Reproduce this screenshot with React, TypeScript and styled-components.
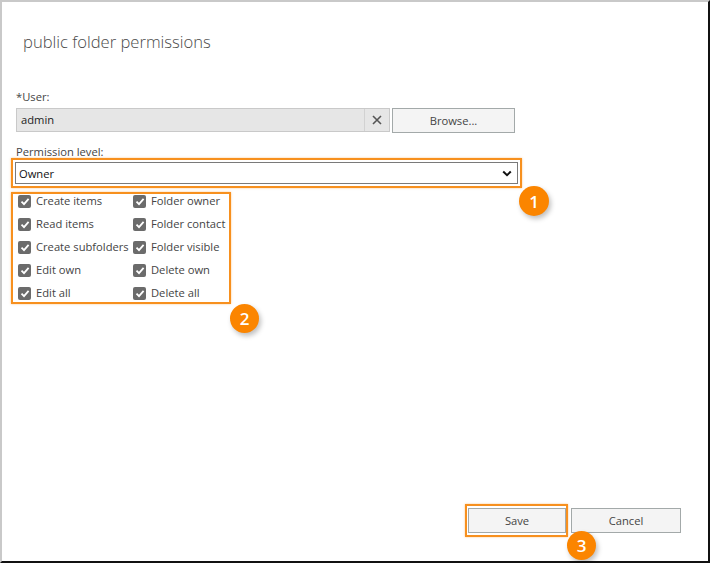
import React from 'react';
import styled, { createGlobalStyle } from 'styled-components';

const GlobalStyle = createGlobalStyle`
	html, body {
		margin: 0;
		padding: 0;
		background: #ffffff;
	}
	body {
		font-family: 'Open Sans', 'Noto Sans', sans-serif;
		color: #333333;
	}
`;

const ORANGE = '#f7901e';
const TEXT_SIZE = '11.2px';

const Frame = styled.div`
	position: relative;
	box-sizing: border-box;
	width: 710px;
	height: 563px;
	display: flex;
	flex-direction: column;
	border-top: 2px solid #c9c9c9;
	border-left: 2px solid #c9c9c9;
	border-right: 2px solid #111111;
	border-bottom: 2px solid #111111;
	background: #ffffff;
`;

const Title = styled.h1`
	margin: 29px 0 0 21px;
	font-size: 16.6px;
	line-height: 22px;
	font-weight: 300;
	color: #4a4a4a;
`;

const Form = styled.div`
	display: flex;
	flex-direction: column;
	padding: 36px 0 0 14px;
`;

const Label = styled.div<{ $height?: number }>`
	font-size: ${TEXT_SIZE};
	line-height: ${(p) => p.$height ?? 16}px;
	color: #444444;
	white-space: nowrap;
`;

const UserRow = styled.div`
	display: flex;
	align-items: stretch;
	gap: 2px;
	margin: 3px 0 13px;
	height: 24px;
`;

const UserInput = styled.div`
	box-sizing: border-box;
	width: 374px;
	display: flex;
	background: #e6e6e6;
	border: 1px solid #c9c9c9;
`;

const UserValue = styled.div`
	flex: 1;
	padding-left: 4px;
	font-size: ${TEXT_SIZE};
	line-height: 22px;
	color: #222222;
`;

const ClearCell = styled.div`
	width: 24px;
	display: flex;
	align-items: center;
	justify-content: center;
	border-left: 1px solid #d2d2d2;
`;

const Button = styled.button<{ $width: number }>`
	box-sizing: border-box;
	width: ${(p) => p.$width}px;
	height: 25px;
	padding: 0;
	background: #f4f4f4;
	border: 1px solid #a3a9a9;
	font-family: inherit;
	font-size: ${TEXT_SIZE};
	color: #444444;
	cursor: pointer;
`;

const Highlight = styled.div<{ $width?: number }>`
	position: relative;
	box-sizing: border-box;
	width: ${(p) => (p.$width ? `${p.$width}px` : 'auto')};
	border: 2px solid ${ORANGE};
	box-shadow: 0 0 2px rgba(247, 144, 30, 0.5);
`;

const SelectWrap = styled(Highlight)`
	margin-left: -5px;
	padding: 2px;
`;

const SelectBox = styled.div`
	box-sizing: border-box;
	height: 22px;
	display: flex;
	align-items: center;
	justify-content: space-between;
	padding: 0 5px 0 3px;
	border: 1px solid #7a7a7a;
	background: #ffffff;
	font-size: ${TEXT_SIZE};
	color: #111111;
`;

const CheckGroup = styled(Highlight)`
	margin: 4px 0 0 -5px;
	padding: 0 0 2px 5px;
	display: grid;
	grid-template-columns: 115px 1fr;
	row-gap: 9px;
`;

const CheckItem = styled.label`
	display: flex;
	align-items: center;
	gap: 5px;
	height: 14px;
	font-size: ${TEXT_SIZE};
	line-height: 14px;
	color: #444444;
	white-space: nowrap;
`;

const Box = styled.span`
	width: 13px;
	height: 13px;
	flex: none;
	border-radius: 2px;
	background: #6b6b6b;
	display: flex;
	align-items: center;
	justify-content: center;
`;

const Footer = styled.div`
	margin-top: auto;
	display: flex;
	justify-content: flex-end;
	align-items: center;
	gap: 3px;
	padding: 0 27px 24px 0;
`;

const SaveWrap = styled(Highlight)`
	padding: 2px 0 2px 1px;
	width: 103px;
`;

const Badge = styled.div<{ $left: number; $top: number; $size: number }>`
	position: absolute;
	left: ${(p) => p.$left}px;
	top: ${(p) => p.$top}px;
	width: ${(p) => p.$size}px;
	height: ${(p) => p.$size}px;
	border-radius: 50%;
	background: #fb8500;
	color: #ffffff;
	font-family: 'Open Sans', 'Noto Sans', sans-serif;
	font-size: 17px;
	font-weight: 600;
	display: flex;
	align-items: center;
	justify-content: center;
	box-shadow: 2px 3px 5px rgba(0, 0, 0, 0.25);
	z-index: 2;
`;

const Check = () => (
	<svg width="10" height="9" viewBox="0 0 10 9">
		<path d="M1.5 4.6 L4 7.1 L8.6 1.8" fill="none" stroke="#ffffff" strokeWidth="1.8" />
	</svg>
);

const checks: [string, string][] = [
	['Create items', 'Folder owner'],
	['Read items', 'Folder contact'],
	['Create subfolders', 'Folder visible'],
	['Edit own', 'Delete own'],
	['Edit all', 'Delete all'],
];

export default function App() {
	return (
		<Frame>
			<GlobalStyle />
			<Title>public folder permissions</Title>
			<Form>
				<Label>*User:</Label>
				<UserRow>
					<UserInput>
						<UserValue>admin</UserValue>
						<ClearCell>
							<svg width="10" height="10" viewBox="0 0 10 10">
								<path d="M1 1 L9 9 M9 1 L1 9" stroke="#555555" strokeWidth="1.6" />
							</svg>
						</ClearCell>
					</UserInput>
					<Button $width={123}>Browse...</Button>
				</UserRow>
				<Label $height={13}>Permission level:</Label>
				<SelectWrap $width={511}>
					<SelectBox>
						<span>Owner</span>
						<svg width="10" height="7" viewBox="0 0 10 7">
							<path d="M1.2 1.5 L5 5.2 L8.8 1.5" fill="none" stroke="#111111" strokeWidth="2" />
						</svg>
					</SelectBox>
					<Badge $left={506} $top={26} $size={30}>1</Badge>
				</SelectWrap>
				<CheckGroup $width={220}>
					{checks.flat().map((label) => (
						<CheckItem key={label}>
							<Box>
								<Check />
							</Box>
							{label}
						</CheckItem>
					))}
					<Badge $left={217} $top={110} $size={29}>2</Badge>
				</CheckGroup>
			</Form>
			<Footer>
				<SaveWrap>
					<Button $width={98}>Save</Button>
					<Badge $left={100} $top={25} $size={29}>3</Badge>
				</SaveWrap>
				<Button $width={110}>Cancel</Button>
			</Footer>
		</Frame>
	);
}
